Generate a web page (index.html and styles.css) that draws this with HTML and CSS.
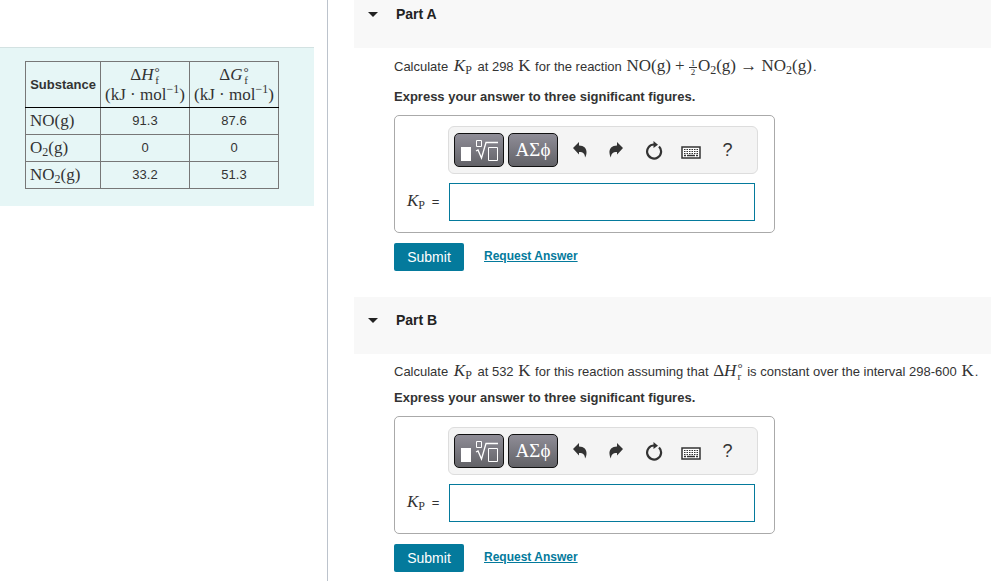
FILE: index.html
```html
<!DOCTYPE html>
<html lang="en">
<head>
<meta charset="utf-8">
<title>Equilibrium constants</title>
<link rel="stylesheet" href="styles.css">
</head>
<body>
<svg class="sprite" aria-hidden="true">
  <symbol id="template" viewBox="0 0 40 24"><path d="M2 9h10v14H2z" fill="#fff"/><path d="M17.500 2.500h5v6h-5zM29.500 9.500h9v13h-9z" fill="none" stroke="#fff"/><path d="M17 13l2-1 3.500 8L27 4.500h12" fill="none" stroke="#fff" stroke-width="1.300"/></symbol>
  <symbol id="undo" viewBox="0 0 14 16"><path d="M6 0v3.500c5 0 8 3 7.500 7.500-.2 2-.6 3-1.500 4.500 0-3.500-1.500-5.500-6-5.500v2.500L0 6z" fill="#333"/></symbol>
  <symbol id="reset" viewBox="0 0 18 20"><path d="M14 6.500A7 7 0 1 1 9 4.500" fill="none" stroke="#333" stroke-width="2.200"/><path d="M8.500 1l4.500 3.700-4.500 3.300z" fill="#333"/></symbol>
  <symbol id="keyboard" viewBox="0 0 20 13"><path d="M1 1h18v11H1z" fill="#fff" stroke="#333" stroke-width="1.500"/><path d="M3 3.500h14M3 5.500h14M3 7.500h14" stroke="#333" stroke-dasharray="1.500 1"/><path d="M3 9.500h2M6 9.500h8M15 9.500h2" stroke="#333" stroke-width="1.500"/></symbol>
</svg>
<div class="page">
  <aside class="side">
    <div class="data">
      <table>
        <thead>
          <tr>
            <th scope="col">Substance</th>
            <th scope="col" class="m unit">Δ<i>H</i><span class="stack"><span class="ring">°</span><span>f</span></span><br>(kJ · mol<sup>−1</sup>)</th>
            <th scope="col" class="m unit">Δ<i>G</i><span class="stack"><span class="ring">°</span><span>f</span></span><br>(kJ · mol<sup>−1</sup>)</th>
          </tr>
        </thead>
        <tbody>
          <tr><th scope="row" class="m">NO(g)</th><td>91.3</td><td>87.6</td></tr>
          <tr><th scope="row" class="m">O<sub>2</sub>(g)</th><td>0</td><td>0</td></tr>
          <tr><th scope="row" class="m">NO<sub>2</sub>(g)</th><td>33.2</td><td>51.3</td></tr>
        </tbody>
      </table>
    </div>
  </aside>
  <main class="main">
    <section class="part first">
      <header class="head"><button class="toggle" aria-label="Collapse Part A"></button><h2>Part A</h2></header>
      <div class="body">
        <p class="question">Calculate <span class="m var"><i>K</i><sub>P</sub></span> at 298 <span class="m">K</span> for the reaction <span class="m">NO(g) + <span class="frac"><span>1</span><span class="den">2</span></span>O<sub>2</sub>(g) → NO<sub>2</sub>(g)</span>.</p>
        <p class="hint">Express your answer to three significant figures.</p>
        <form class="answer">
          <div class="tools">
            <button type="button" class="dark" aria-label="Templates"><svg width="40" height="24"><use href="#template"/></svg></button>
            <button type="button" class="dark">ΑΣϕ</button>
            <button type="button" class="tool" aria-label="Undo"><svg width="14" height="16"><use href="#undo"/></svg></button>
            <button type="button" class="tool flip" aria-label="Redo"><svg width="14" height="16"><use href="#undo"/></svg></button>
            <button type="button" class="tool" aria-label="Reset"><svg width="18" height="20"><use href="#reset"/></svg></button>
            <button type="button" class="tool low" aria-label="Keyboard"><svg width="20" height="13"><use href="#keyboard"/></svg></button>
            <button type="button" class="tool">?</button>
          </div>
          <label for="kpa"><span class="m"><i>K</i><sub>P</sub></span> =</label>
          <input id="kpa" type="text">
        </form>
        <div class="actions"><button class="submit">Submit</button><a href="#">Request Answer</a></div>
      </div>
    </section>
    <section class="part">
      <header class="head"><button class="toggle" aria-label="Collapse Part B"></button><h2>Part B</h2></header>
      <div class="body">
        <p class="question">Calculate <span class="m var"><i>K</i><sub>P</sub></span> at 532 <span class="m">K</span> for this reaction assuming that <span class="m">Δ<i>H</i><span class="stack"><span class="ring">°</span><span>r</span></span></span> is constant over the interval 298-600 <span class="m">K</span>.</p>
        <p class="hint">Express your answer to three significant figures.</p>
        <form class="answer">
          <div class="tools">
            <button type="button" class="dark" aria-label="Templates"><svg width="40" height="24"><use href="#template"/></svg></button>
            <button type="button" class="dark">ΑΣϕ</button>
            <button type="button" class="tool" aria-label="Undo"><svg width="14" height="16"><use href="#undo"/></svg></button>
            <button type="button" class="tool flip" aria-label="Redo"><svg width="14" height="16"><use href="#undo"/></svg></button>
            <button type="button" class="tool" aria-label="Reset"><svg width="18" height="20"><use href="#reset"/></svg></button>
            <button type="button" class="tool low" aria-label="Keyboard"><svg width="20" height="13"><use href="#keyboard"/></svg></button>
            <button type="button" class="tool">?</button>
          </div>
          <label for="kpb"><span class="m"><i>K</i><sub>P</sub></span> =</label>
          <input id="kpb" type="text">
        </form>
        <div class="actions"><button class="submit">Submit</button><a href="#">Request Answer</a></div>
      </div>
    </section>
  </main>
</div>
</body>
</html>
```
FILE: styles.css
```css
* { box-sizing: border-box; }
body { margin: 0; background: #fff; color: #333; font: 13px/20px "Liberation Sans", Arial, sans-serif; }
.sprite { display: none; }
button { border: 0; padding: 0; background: none; color: inherit; font: inherit; }
.page { display: flex; min-height: 100vh; padding-right: 17px; }
.side { flex: 0 0 328px; padding: 47px 13px 0 0; border-right: 1px solid #bcc3cc; }
.data { padding: 13px 25px 17px; background: #e6f6f6; border-top: 1px solid #d3e2e2; }
table { border-collapse: collapse; table-layout: fixed; width: 254px; }
th, td { height: 27px; padding: 0; border: 1px solid #777; text-align: center; line-height: 20px; }
thead th { height: 46px; border-bottom-color: #000; }
thead th:first-child { width: 75px; }
tbody th { padding-left: 4px; text-align: left; }
.m { font-family: "Liberation Serif", "Times New Roman", serif; font-size: 17px; font-weight: 400; line-height: 16px; }
.m sub, .m sup { font-size: 12px; line-height: 0; }
.m sub { vertical-align: -3px; }
.unit { line-height: 19px; white-space: nowrap; }
.question .m { margin: 0 1px; }
.question .var { margin: 0 2px; }
.stack { display: inline-grid; height: 18px; margin-left: 1px; vertical-align: middle; font-size: 11px; line-height: 9px; }
.ring { font-size: 13px; }
.frac { display: inline-grid; width: 8px; margin-right: 1px; vertical-align: middle; font-size: 9px; line-height: 8px; text-align: center; }
.den { border-top: 1px solid #333; }
.main { flex: 1; min-width: 0; padding-left: 26px; }
.head { display: flex; align-items: flex-start; gap: 18px; min-height: 57px; padding: 13px 14px; background: #f8f8f8; }
.first .head { min-height: 48px; padding-top: 4px; }
.toggle { width: 10px; height: 5px; margin-top: 8px; background: #222; clip-path: polygon(0 0, 100% 0, 50% 100%); }
h2 { margin: 0; color: #222; font-size: 14px; line-height: 20px; }
.body { padding: 8px 0 26px 40px; }
.part:last-child .body { padding-bottom: 8px; }
p { margin: 0; }
.question { height: 20px; white-space: nowrap; }
.first .question { margin-top: 1px; }
.hint { margin: 6px 0 8px; font-weight: 700; }
.first .hint { margin-top: 10px; }
.answer { display: grid; grid-template-columns: 42px 1fr; row-gap: 9px; align-items: center; max-width: 381px; padding: 10px 16px 11px 11px; border: 1px solid #aaa; border-radius: 5px; }
.answer label { padding-left: 1px; }
.answer label .m { margin-right: 3px; }
.tools { grid-column: 2; display: flex; align-items: center; height: 48px; padding: 0 5px; border: 1px solid #ddd; border-radius: 6px; background: #f4f4f4; }
.dark { display: grid; place-items: center; width: 50px; height: 34px; margin-right: 4px; border: 1px solid #111; border-radius: 5px; background: linear-gradient(#8f8d97, #626267); color: #fff; font: 19px/24px "Liberation Serif", "Times New Roman", serif; }
.dark + .dark { margin-right: 3px; }
.tool { display: grid; place-items: center; width: 37px; height: 34px; font-size: 18px; }
.flip { transform: scaleX(-1); }
.low { padding-top: 4px; }
.answer input { width: 100%; max-width: 306px; height: 38px; margin: 0 0 0 1px; padding: 0 8px; border: 1px solid #047a9c; background: #fff; font: inherit; }
.actions { display: flex; gap: 20px; margin-top: 10px; }
.submit { width: 70px; height: 28px; border-radius: 2px; background: #047a9c; color: #fff; font-size: 14px; }
.actions a { margin-top: 3px; color: #047a9c; font-size: 12px; font-weight: 700; }
```
